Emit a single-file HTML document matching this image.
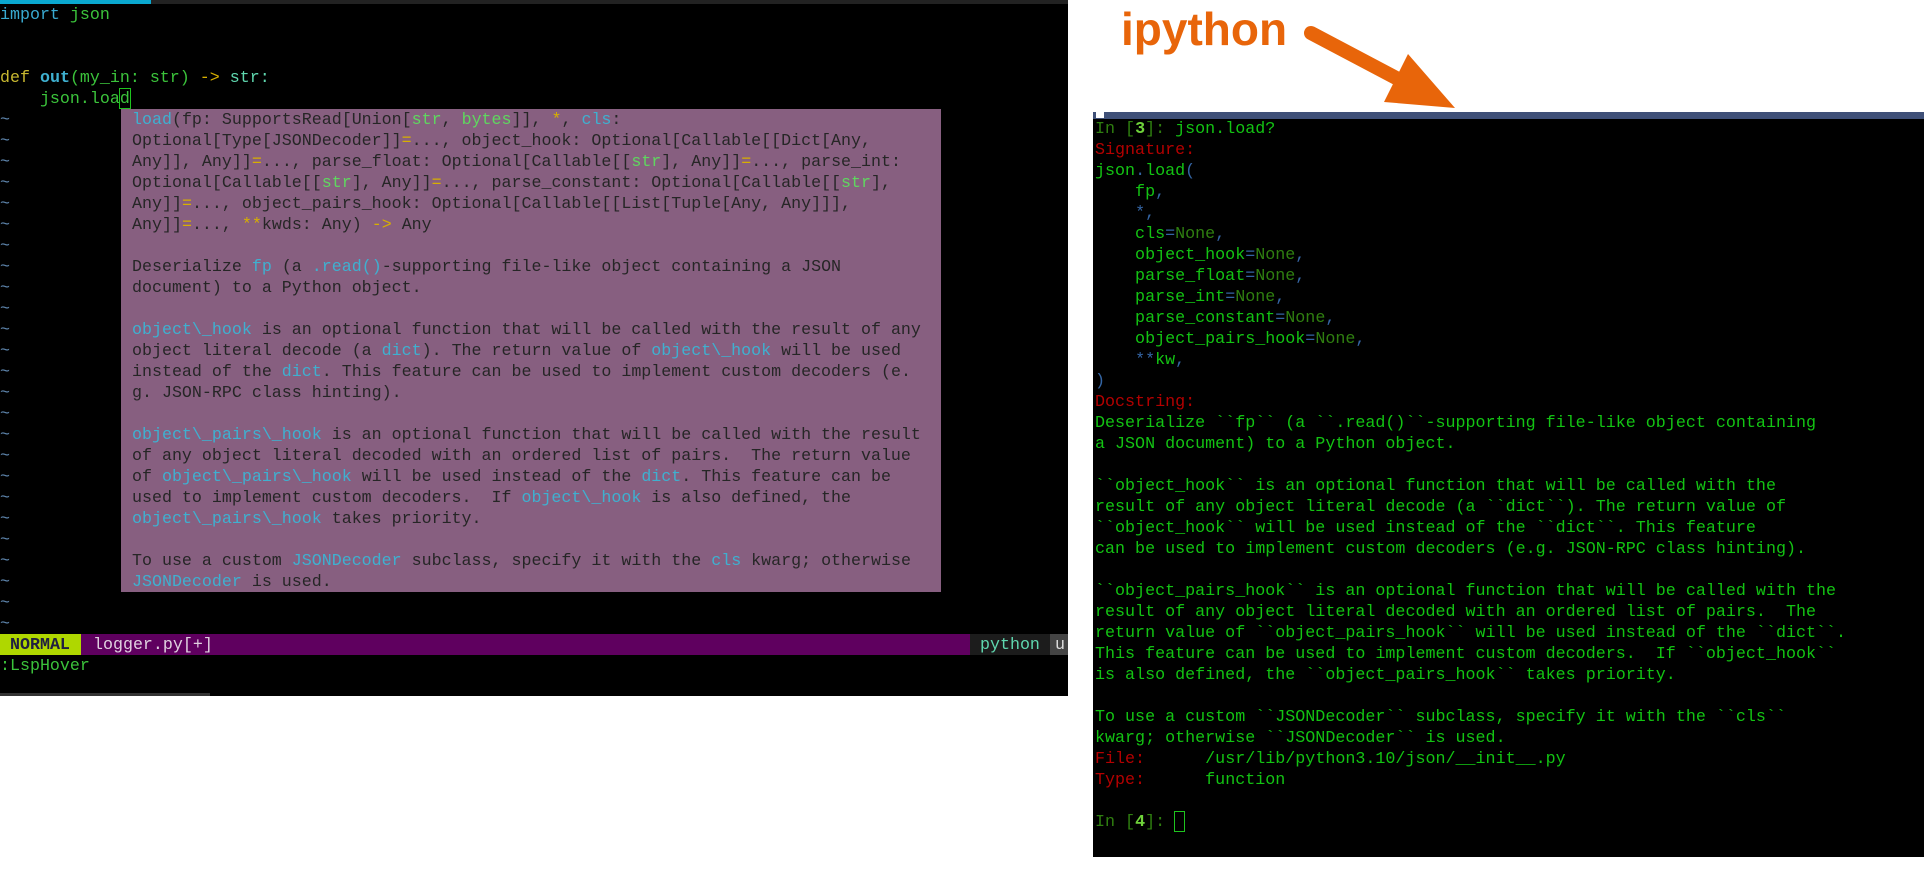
<!DOCTYPE html>
<html><head><meta charset="utf-8"><style>
*{margin:0;padding:0}
body{width:1932px;height:872px;background:#fff;position:relative;overflow:hidden;font-family:"Liberation Mono",monospace}
#vim{position:absolute;left:0;top:0;width:1068px;height:696px;background:#000}
.row{position:absolute;left:0;height:21px;line-height:21px;font-size:16.65px;white-space:pre}
.t{color:#5f87af}
#pop{position:absolute;left:121px;top:109px;width:820px;height:483px;background:#875f80}
#pop .row{left:11px;color:#262626}
.c{color:#3fb0d0}.y{color:#d7af00}.g{color:#5fd75f}
#ipy{position:absolute;left:1093px;top:112px;width:831px;height:745px;background:#000}
#bar{position:absolute;left:0;top:0;width:100%;height:7px;background:#3f5078}
#ipy .row{left:2px;font-size:16.7px;color:#13c313}
.r{color:#b30000}.dg{color:#2f7f10}.b{color:#3465a4}
</style></head><body>
<div id="vim">
<div style="position:absolute;left:0;top:0;width:1068px;height:4px;background:#222"></div>
<div style="position:absolute;left:0;top:0;width:151px;height:4px;background:#0aa8d0"></div>
<div class="row" style="top:4px"><span style="color:#39a9d0">import</span> <span style="color:#3bc33b">json</span></div>
<div class="row" style="top:67px"><span style="color:#c8b830">def</span> <b style="color:#3fb0d0">out</b><span style="color:#3bc33b">(my_in: str)</span> <span style="color:#d7af00">-&gt;</span> <span style="color:#5fd7af">str:</span></div>
<div class="row" style="top:88px;color:#3bc33b">    json.loa<span style="outline:1px solid #1ec41e">d</span></div>
<div id="tl"></div>
<div id="pop">
<div class="row" style="top:0"><span class="c">load</span>(fp: SupportsRead[Union[<span class="g">str</span>, <span class="g">bytes</span>]], <span class="y">*</span>, <span class="c">cls</span>:</div>
<div class="row" style="top:21px">Optional[Type[JSONDecoder]]<span class="y">=</span>..., object_hook: Optional[Callable[[Dict[Any,</div>
<div class="row" style="top:42px">Any]], Any]]<span class="y">=</span>..., parse_float: Optional[Callable[[<span class="g">str</span>], Any]]<span class="y">=</span>..., parse_int:</div>
<div class="row" style="top:63px">Optional[Callable[[<span class="g">str</span>], Any]]<span class="y">=</span>..., parse_constant: Optional[Callable[[<span class="g">str</span>],</div>
<div class="row" style="top:84px">Any]]<span class="y">=</span>..., object_pairs_hook: Optional[Callable[[List[Tuple[Any, Any]]],</div>
<div class="row" style="top:105px">Any]]<span class="y">=</span>..., <span class="y">**</span>kwds: Any) <span class="y">-&gt;</span> Any</div>
<div class="row" style="top:147px">Deserialize <span class="c">fp</span> (a <span class="c">.read()</span>-supporting file-like object containing a JSON</div>
<div class="row" style="top:168px">document) to a Python object.</div>
<div class="row" style="top:210px"><span class="c">object\_hook</span> is an optional function that will be called with the result of any</div>
<div class="row" style="top:231px">object literal decode (a <span class="c">dict</span>). The return value of <span class="c">object\_hook</span> will be used</div>
<div class="row" style="top:252px">instead of the <span class="c">dict</span>. This feature can be used to implement custom decoders (e.</div>
<div class="row" style="top:273px">g. JSON-RPC class hinting).</div>
<div class="row" style="top:315px"><span class="c">object\_pairs\_hook</span> is an optional function that will be called with the result</div>
<div class="row" style="top:336px">of any object literal decoded with an ordered list of pairs.  The return value</div>
<div class="row" style="top:357px">of <span class="c">object\_pairs\_hook</span> will be used instead of the <span class="c">dict</span>. This feature can be</div>
<div class="row" style="top:378px">used to implement custom decoders.  If <span class="c">object\_hook</span> is also defined, the</div>
<div class="row" style="top:399px"><span class="c">object\_pairs\_hook</span> takes priority.</div>
<div class="row" style="top:441px">To use a custom <span class="c">JSONDecoder</span> subclass, specify it with the <span class="c">cls</span> kwarg; otherwise</div>
<div class="row" style="top:462px"><span class="c">JSONDecoder</span> is used.</div>
</div>
<div style="position:absolute;left:0;top:634px;width:1068px;height:21px;background:#5f005f"></div>
<div class="row" style="top:634px;width:81px;background:#afd700;color:#202040;font-weight:bold;text-indent:10px">NORMAL</div>
<div class="row" style="top:634px;left:93px;color:#e0d0e0">logger.py[+]</div>
<div class="row" style="top:634px;left:970px;width:80px;background:#1c1c1c;color:#5fd7af;text-indent:10px">python</div>
<div class="row" style="top:634px;left:1050px;width:18px;background:#444;color:#ddd;text-indent:5px">u</div>
<div class="row" style="top:655px;color:#3bc33b">:LspHover</div>
<div style="position:absolute;left:0;top:693px;width:210px;height:3px;background:#333"></div>
</div>
<div style="position:absolute;left:1121px;top:1px;font:bold 46px 'Liberation Sans',sans-serif;color:#e8650a;line-height:56px">ipython</div>
<svg style="position:absolute;left:0;top:0" width="1932" height="872"><path d="M1311 33 L1400 80" stroke="#e8650a" stroke-width="14" stroke-linecap="round"/><polygon points="1455,108 1408,54 1384,102" fill="#e8650a"/></svg>
<div id="ipy">
<div id="bar"><div style="position:absolute;left:3px;top:0;width:8px;height:6px;background:#fff"></div></div>
</div>
<script>
var tl=document.getElementById('tl'),h='';
for(var i=5;i<30;i++)h+='<div class="row t" style="top:'+(4+i*21)+'px">~</div>';
tl.innerHTML=h;
var L=[
'<span class="dg">In [</span><b style="color:#6fd23a">3</b><span class="dg">]: </span>json.load?',
'<span class="r">Signature:</span>',
'json<span class="b">.</span>load<span class="b">(</span>',
'    fp<span class="b">,</span>',
'    <span class="b">*,</span>',
'    cls<span class="b">=</span><span class="dg">None</span><span class="b">,</span>',
'    object_hook<span class="b">=</span><span class="dg">None</span><span class="b">,</span>',
'    parse_float<span class="b">=</span><span class="dg">None</span><span class="b">,</span>',
'    parse_int<span class="b">=</span><span class="dg">None</span><span class="b">,</span>',
'    parse_constant<span class="b">=</span><span class="dg">None</span><span class="b">,</span>',
'    object_pairs_hook<span class="b">=</span><span class="dg">None</span><span class="b">,</span>',
'    <span class="b">**</span>kw<span class="b">,</span>',
'<span class="b">)</span>',
'<span class="r">Docstring:</span>',
'Deserialize ``fp`` (a ``.read()``-supporting file-like object containing',
'a JSON document) to a Python object.',
'',
'``object_hook`` is an optional function that will be called with the',
'result of any object literal decode (a ``dict``). The return value of',
'``object_hook`` will be used instead of the ``dict``. This feature',
'can be used to implement custom decoders (e.g. JSON-RPC class hinting).',
'',
'``object_pairs_hook`` is an optional function that will be called with the',
'result of any object literal decoded with an ordered list of pairs.  The',
'return value of ``object_pairs_hook`` will be used instead of the ``dict``.',
'This feature can be used to implement custom decoders.  If ``object_hook``',
'is also defined, the ``object_pairs_hook`` takes priority.',
'',
'To use a custom ``JSONDecoder`` subclass, specify it with the ``cls``',
'kwarg; otherwise ``JSONDecoder`` is used.',
'<span class="r">File:</span>      /usr/lib/python3.10/json/__init__.py',
'<span class="r">Type:</span>      function',
'',
'<span class="dg">In [</span><b style="color:#6fd23a">4</b><span class="dg">]: </span><span style="display:inline-block;width:9px;height:19px;outline:1px solid #1ec41e;vertical-align:middle"></span>'
];
h='';for(i=0;i<L.length;i++)h+='<div class="row" style="top:'+(7+i*21)+'px">'+L[i]+'</div>';
document.getElementById('ipy').innerHTML+=h;
</script>
</body></html>
